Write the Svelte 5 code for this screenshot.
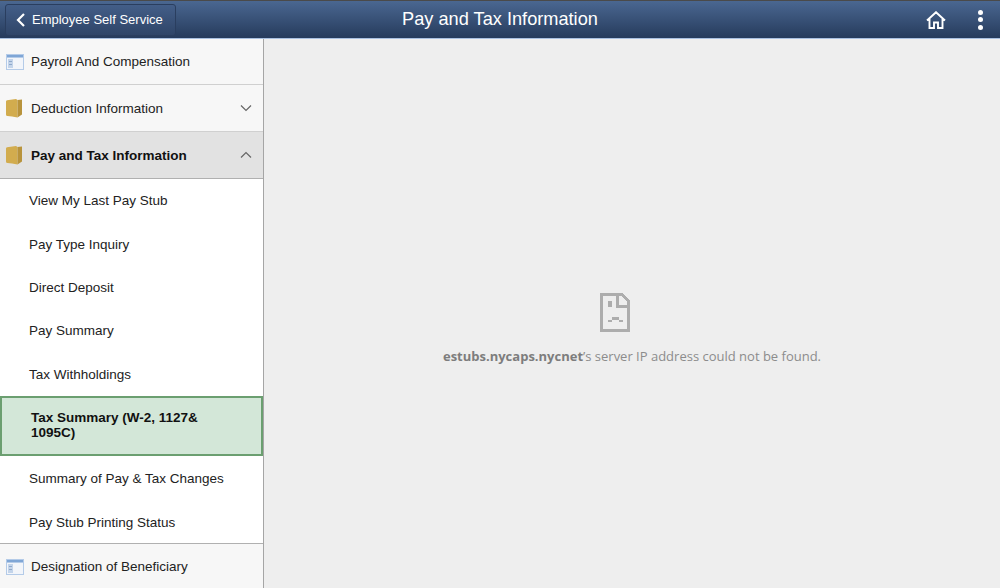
<script>
    const children = [
        'View My Last Pay Stub',
        'Pay Type Inquiry',
        'Direct Deposit',
        'Pay Summary',
        'Tax Withholdings'
    ];
</script>

{#snippet windowIcon()}
    <svg class="icon" width="18" height="18" viewBox="0 0 18 18">
        <rect x="0" y="1" width="18" height="16" fill="#b4cbe8" />
        <rect x="1" y="5" width="16" height="11" fill="#f2f5fa" />
        <rect x="1" y="2" width="16" height="2" fill="#7fa6d6" />
        <rect x="2" y="6" width="5" height="9" fill="#c3d4ea" />
        <rect x="3" y="8" width="3" height="1" fill="#8fa9cb" />
        <rect x="3" y="11" width="3" height="1" fill="#8fa9cb" />
    </svg>
{/snippet}

{#snippet folderIcon()}
    <svg class="icon folder" width="16" height="19" viewBox="0 0 16 19">
        <path d="M0 2.5 Q0 1.5 1 1.3 L10 0 L11.5 1 V18.5 L6 17.5 L1.5 17 Q0 17 0 15.5 Z" fill="#d2ac4e" />
        <path d="M11.5 1 L16 0.5 V15.5 L11.5 18.5 Z" fill="#b8933c" />
    </svg>
{/snippet}

{#snippet chevron(up)}
    <svg class="chev" width="12" height="8" viewBox="0 0 12 8">
        <path d={up ? 'M1 6.5 L6 1.5 L11 6.5' : 'M1 1.5 L6 6.5 L11 1.5'} fill="none" stroke="#666" stroke-width="1.2" />
    </svg>
{/snippet}

<div class="page">
    <header class="bar">
        <button class="back">
            <svg width="9" height="14" viewBox="0 0 9 14">
                <path d="M8 1 L2 7 L8 13" fill="none" stroke="#fff" stroke-width="2.2" />
            </svg>
            Employee Self Service
        </button>
        <h1>Pay and Tax Information</h1>
        <div class="actions">
            <svg width="20" height="18" viewBox="0 0 20 18">
                <path d="M1 9.5 L10 1.2 L19 9.5 M3.5 8 V17 H8 V11.5 H12 V17 H16.5 V8" fill="none" stroke="#fff" stroke-width="1.9" />
            </svg>
            <div class="dots"><span></span><span></span><span></span></div>
        </div>
    </header>

    <div class="main">
        <nav class="side">
            <div class="row">
                {@render windowIcon()}
                <span>Payroll And Compensation</span>
            </div>
            <div class="row second">
                {@render folderIcon()}
                <span>Deduction Information</span>
                {@render chevron(false)}
            </div>
            <div class="row open">
                {@render folderIcon()}
                <span>Pay and Tax Information</span>
                {@render chevron(true)}
            </div>
            <ul>
                {#each children as c}
                    <li>{c}</li>
                {/each}
                <li class="active">Tax Summary (W-2, 1127&amp; 1095C)</li>
                <li>Summary of Pay &amp; Tax Changes</li>
                <li>Pay Stub Printing Status</li>
            </ul>
            <div class="row last">
                {@render windowIcon()}
                <span>Designation of Beneficiary</span>
            </div>
        </nav>

        <section class="content">
            <svg width="30" height="39" viewBox="0 0 30 39" shape-rendering="crispEdges">
                <path d="M1.5 1.5 H22 L28.5 8 V37.5 H1.5 Z" fill="none" stroke="#adadad" stroke-width="3" />
                <path d="M17.5 1.5 V13.5 H28.5" fill="none" stroke="#adadad" stroke-width="3" />
                <rect x="8" y="8" width="4" height="6" fill="#adadad" />
                <rect x="12" y="24" width="7" height="3" fill="#adadad" />
                <rect x="8" y="27" width="4" height="2" fill="#adadad" />
                <rect x="19" y="27" width="4" height="2" fill="#adadad" />
            </svg>
            <p><b>estubs.nycaps.nycnet</b>’s server IP address could not be found.</p>
        </section>
    </div>
</div>

<style>
    :global(body) {
        margin: 0;
    }
    .page {
        width: 1000px;
        height: 588px;
        overflow: hidden;
        display: flex;
        flex-direction: column;
        font-family: "Liberation Sans", Arial, sans-serif;
        background: #eee;
    }
    .bar {
        height: 37px;
        flex: none;
        position: relative;
        display: flex;
        align-items: center;
        justify-content: space-between;
        padding: 0 17px 0 5px;
        background: linear-gradient(#4a6791, #263b5c);
        border-top: 1px solid #4a4a4a;
        border-bottom: 1px solid #a9c0e0;
    }
    .back {
        display: flex;
        align-items: center;
        gap: 7px;
        height: 32px;
        padding: 0 12px 0 10px;
        color: #fff;
        font: 13px "Liberation Sans", Arial, sans-serif;
        background: linear-gradient(#435e88, #2f4568);
        border: 1px solid #2a3e5f;
        border-radius: 3px;
    }
    h1 {
        position: absolute;
        left: 0;
        right: 0;
        margin: 0;
        text-align: center;
        color: #fff;
        font-size: 18.2px;
        font-weight: normal;
        pointer-events: none;
    }
    .actions {
        display: flex;
        align-items: center;
        gap: 32px;
    }
    .dots {
        display: flex;
        flex-direction: column;
        gap: 2.5px;
    }
    .dots span {
        width: 5px;
        height: 5px;
        border-radius: 50%;
        background: #fff;
    }
    .main {
        flex: 1;
        display: flex;
        min-height: 0;
    }
    .side {
        width: 263px;
        flex: none;
        background: #f7f7f7;
        border-right: 1px solid #a5a5a5;
    }
    .row {
        height: 46px;
        box-sizing: border-box;
        display: flex;
        align-items: center;
        padding: 0 11px 0 6px;
        font-size: 13.5px;
        color: #222;
        border-bottom: 1px solid #d0d0d0;
    }
    .row span {
        flex: 1;
        margin-left: 7px;
    }
    .row .folder + span {
        margin-left: 9px;
    }
    .row.second {
        height: 47px;
    }
    .row.open {
        height: 47px;
        background: #e2e2e2;
        font-weight: bold;
        color: #111;
        border-bottom: 1px solid #b0b0b0;
    }
    .row.last {
        border-bottom: 0;
    }
    .icon {
        flex: none;
    }
    ul {
        list-style: none;
        margin: 0;
        padding: 0;
        background: #fff;
        border-bottom: 1px solid #b0b0b0;
    }
    li {
        height: 43.4px;
        box-sizing: border-box;
        display: flex;
        align-items: center;
        padding-left: 29px;
        font-size: 13.5px;
        color: #222;
    }
    li.active {
        height: 60px;
        padding: 0 50px 2px 29px;
        background: #d3e7d8;
        border: 2px solid #6b9f70;
        font-weight: bold;
        color: #111;
        line-height: 15px;
    }
    li.active ~ li {
        padding-top: 2px;
    }
    .content {
        flex: 1;
        display: flex;
        flex-direction: column;
        align-items: center;
        padding-top: 254px;
        background: #eee;
    }
    .content svg {
        margin-right: 34px;
    }
    p {
        margin: 15px 0 0;
        font-family: "Open Sans", sans-serif;
        font-size: 13px;
        color: #8c8c8c;
    }
    p b {
        color: #7d7d7d;
    }
</style>
